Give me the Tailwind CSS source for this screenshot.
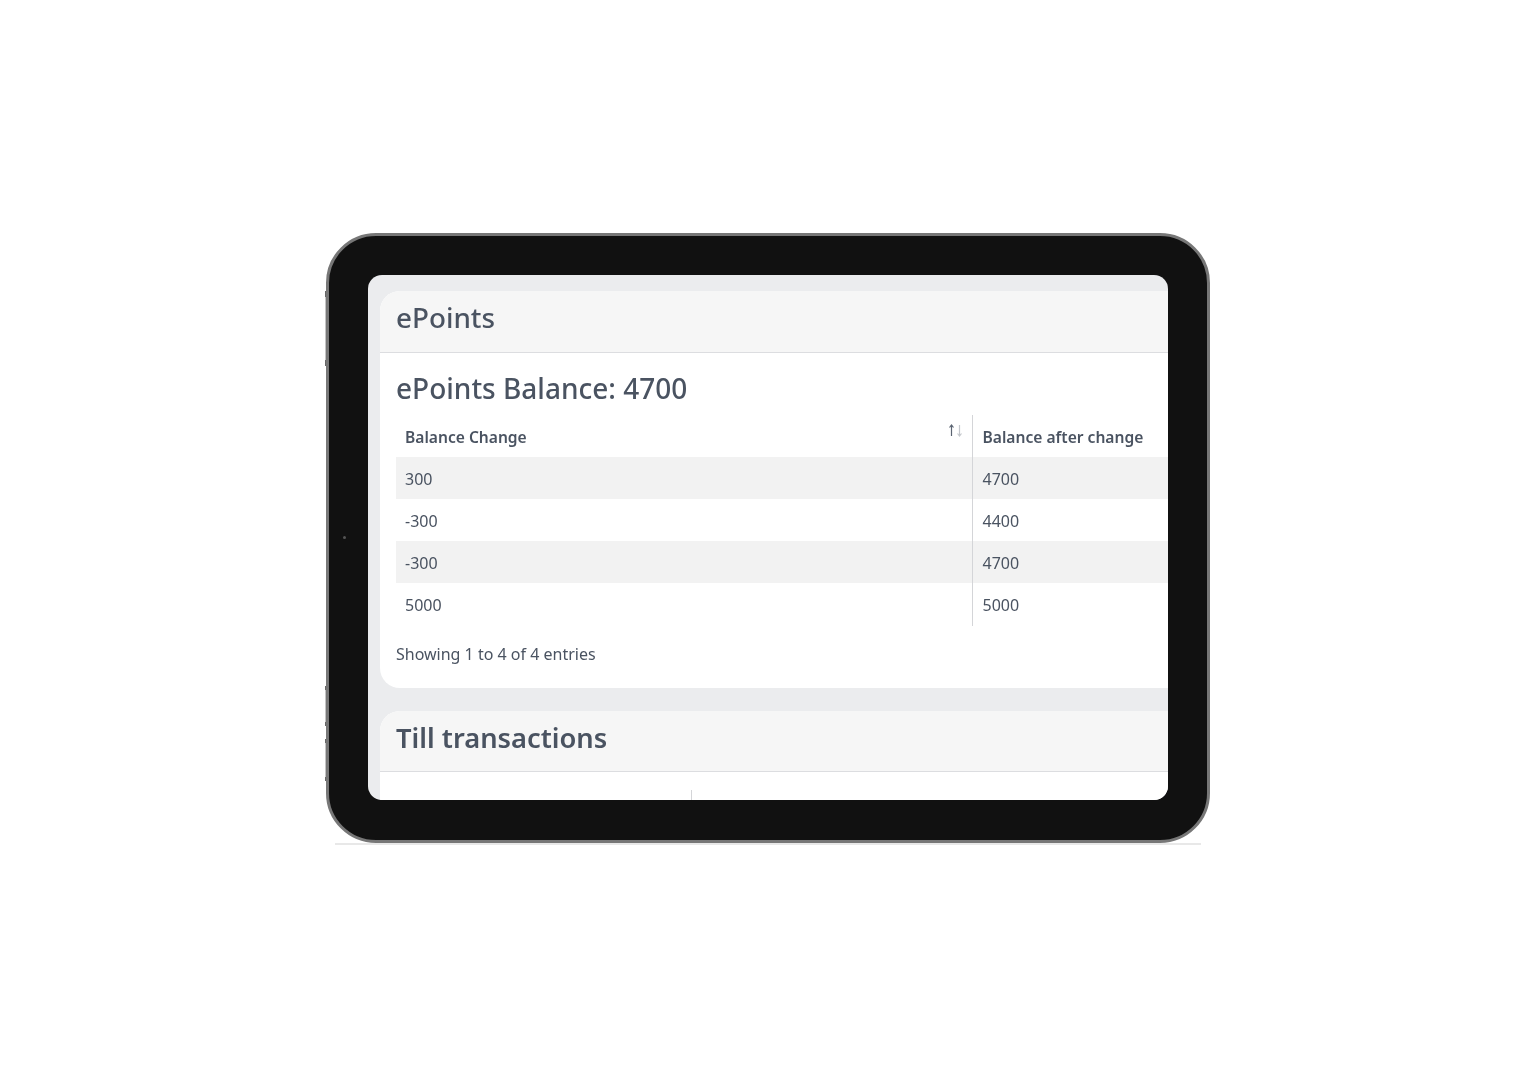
<!DOCTYPE html>
<html lang="en">
<head>
    <meta charset="UTF-8">
    <meta name="viewport" content="width=device-width, initial-scale=1.0">
    <title>ePoints</title>
    <script src="https://cdn.jsdelivr.net/npm/@tailwindcss/browser@4"></script>
</head>
<body class="bg-white h-[1076px] overflow-hidden font-['Noto_Sans',sans-serif] text-[#4a5361]">
    <div class="pt-[233px] pl-[326px]">
        <!-- tablet frame -->
        <div class="relative w-[884px] h-[610px] rounded-[50px] bg-[#111111] border-[3px] border-[#777777] pt-[39px] pl-[39px]">
            <!-- side buttons -->
            <div class="absolute left-[-4px] top-[55px] w-[1px] h-[75px] bg-[#c4c4c4] border-y-[6px] border-[#666666]"></div>
            <div class="absolute left-[-4px] top-[450px] w-[1px] h-[40px] bg-[#c4c4c4] border-y-[4px] border-[#666666]"></div>
            <div class="absolute left-[-4px] top-[503px] w-[1px] h-[42px] bg-[#c4c4c4] border-y-[4px] border-[#666666]"></div>
            <!-- camera -->
            <div class="absolute left-[14px] top-[300px] w-[3px] h-[3px] rounded-full bg-[#555555]"></div>
            <!-- ground shadow -->
            <div class="absolute left-[6px] right-[6px] bottom-[-5px] h-[2px] bg-[#e8e8e8] -z-10"></div>

            <div class="w-[800px] h-[525px] rounded-[14px] bg-[#ebecee] overflow-hidden pt-4 pl-3">
                <!-- ePoints card -->
                <section class="w-[820px] rounded-[20px] bg-white overflow-hidden">
                    <header class="h-[62px] bg-[#f6f6f6] border-b border-[#dcdde0] px-4 flex items-center pb-[8px]">
                        <h2 class="text-[27.8px] leading-none font-medium blur-[0.3px]">ePoints</h2>
                    </header>
                    <div class="px-4 pt-[17px] h-[335px]">
                        <h3 class="text-[28px] leading-[36px] font-medium mb-[9px] blur-[0.3px]">ePoints Balance: 4700</h3>
                        <table class="w-[804px] text-[16px] border-collapse blur-[0.3px]">
                            <thead>
                                <tr class="h-[42px]">
                                    <th class="relative w-[576px] pl-[9px] pt-[4px] text-left text-[15.6px] font-semibold border-r border-[#d4d5d8]">
                                        Balance Change
                                        <svg class="absolute right-[9px] top-[9px]" width="15" height="13" viewBox="0 0 15 13" fill="none" stroke-width="1.2">
                                            <path d="M3.5 12V1M1.5 3.5 3.5 1l2 2.5" stroke="#5b6472"/>
                                            <path d="M11.5 1v11M9.5 9.5l2 2.5 2-2.5" stroke="#c4c7cc"/>
                                        </svg>
                                    </th>
                                    <th class="pl-[10px] pt-[4px] text-left text-[15.6px] font-semibold">Balance after change</th>
                                </tr>
                            </thead>
                            <tbody>
                                <tr class="h-[42px] bg-[#f2f2f2]">
                                    <td class="pl-[9px] pt-[2px] border-r border-[#d4d5d8]">300</td>
                                    <td class="pl-[10px] pt-[2px]">4700</td>
                                </tr>
                                <tr class="h-[42px]">
                                    <td class="pl-[9px] pt-[2px] border-r border-[#d4d5d8]">-300</td>
                                    <td class="pl-[10px] pt-[2px]">4400</td>
                                </tr>
                                <tr class="h-[42px] bg-[#f2f2f2]">
                                    <td class="pl-[9px] pt-[2px] border-r border-[#d4d5d8]">-300</td>
                                    <td class="pl-[10px] pt-[2px]">4700</td>
                                </tr>
                                <tr class="h-[43px]">
                                    <td class="pl-[9px] pt-[2px] pb-[1px] border-r border-[#d4d5d8]">5000</td>
                                    <td class="pl-[10px] pt-[2px] pb-[1px]">5000</td>
                                </tr>
                            </tbody>
                        </table>
                        <p class="mt-[16px] text-[16px] leading-[24px] blur-[0.3px]">Showing 1 to 4 of 4 entries</p>
                    </div>
                </section>

                <!-- Till transactions card -->
                <section class="w-[820px] mt-[23px] rounded-t-[20px] bg-white overflow-hidden">
                    <header class="h-[61px] bg-[#f6f6f6] border-b border-[#dcdde0] px-4 flex items-center pb-[6px]">
                        <h2 class="text-[27.3px] leading-none font-semibold blur-[0.3px]">Till transactions</h2>
                    </header>
                    <div class="h-[60px] pt-[18px] pl-[311px]">
                        <div class="w-px h-[20px] bg-[#d4d5d8]"></div>
                    </div>
                </section>
            </div>
        </div>
    </div>
</body>
</html>
